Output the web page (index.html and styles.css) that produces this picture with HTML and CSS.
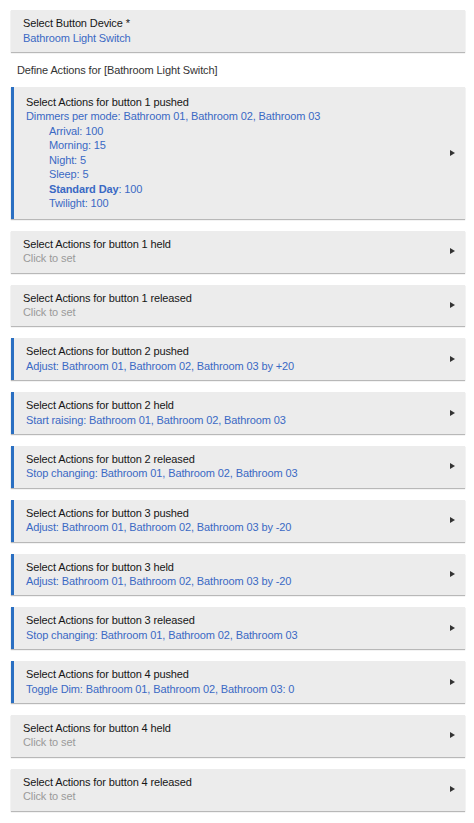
FILE: index.html
```html
<!DOCTYPE html>
<html>
<head>
<meta charset="utf-8">
<link rel="stylesheet" href="styles.css">
</head>
<body>
<div class="page">
  <div class="card">
    <div class="body">
      <div class="title">Select Button Device *</div>
      <div class="value">Bathroom Light Switch</div>
    </div>
  </div>
  <div class="section">Define Actions for [Bathroom Light Switch]</div>
  <div class="list">
    <div class="card set expanded">
      <div class="body">
        <div class="title">Select Actions for button 1 pushed</div>
        <div class="value">Dimmers per mode: Bathroom 01, Bathroom 02, Bathroom 03</div>
        <div class="value indent">Arrival: 100</div>
        <div class="value indent">Morning: 15</div>
        <div class="value indent">Night: 5</div>
        <div class="value indent">Sleep: 5</div>
        <div class="value indent"><b>Standard Day</b>: 100</div>
        <div class="value indent">Twilight: 100</div>
      </div>
      <span class="arrow"></span>
    </div>
    <div class="card">
      <div class="body">
        <div class="title">Select Actions for button 1 held</div>
        <div class="hint">Click to set</div>
      </div>
      <span class="arrow"></span>
    </div>
    <div class="card">
      <div class="body">
        <div class="title">Select Actions for button 1 released</div>
        <div class="hint">Click to set</div>
      </div>
      <span class="arrow"></span>
    </div>
    <div class="card set">
      <div class="body">
        <div class="title">Select Actions for button 2 pushed</div>
        <div class="value">Adjust: Bathroom 01, Bathroom 02, Bathroom 03 by +20</div>
      </div>
      <span class="arrow"></span>
    </div>
    <div class="card set">
      <div class="body">
        <div class="title">Select Actions for button 2 held</div>
        <div class="value">Start raising: Bathroom 01, Bathroom 02, Bathroom 03</div>
      </div>
      <span class="arrow"></span>
    </div>
    <div class="card set">
      <div class="body">
        <div class="title">Select Actions for button 2 released</div>
        <div class="value">Stop changing: Bathroom 01, Bathroom 02, Bathroom 03</div>
      </div>
      <span class="arrow"></span>
    </div>
    <div class="card set">
      <div class="body">
        <div class="title">Select Actions for button 3 pushed</div>
        <div class="value">Adjust: Bathroom 01, Bathroom 02, Bathroom 03 by -20</div>
      </div>
      <span class="arrow"></span>
    </div>
    <div class="card set">
      <div class="body">
        <div class="title">Select Actions for button 3 held</div>
        <div class="value">Adjust: Bathroom 01, Bathroom 02, Bathroom 03 by -20</div>
      </div>
      <span class="arrow"></span>
    </div>
    <div class="card set">
      <div class="body">
        <div class="title">Select Actions for button 3 released</div>
        <div class="value">Stop changing: Bathroom 01, Bathroom 02, Bathroom 03</div>
      </div>
      <span class="arrow"></span>
    </div>
    <div class="card set">
      <div class="body">
        <div class="title">Select Actions for button 4 pushed</div>
        <div class="value">Toggle Dim: Bathroom 01, Bathroom 02, Bathroom 03: 0</div>
      </div>
      <span class="arrow"></span>
    </div>
    <div class="card">
      <div class="body">
        <div class="title">Select Actions for button 4 held</div>
        <div class="hint">Click to set</div>
      </div>
      <span class="arrow"></span>
    </div>
    <div class="card">
      <div class="body">
        <div class="title">Select Actions for button 4 released</div>
        <div class="hint">Click to set</div>
      </div>
      <span class="arrow"></span>
    </div>
  </div>
</div>
</body>
</html>
```
FILE: styles.css
```css
html, body {
  margin: 0;
  padding: 0;
  background: #ffffff;
}
body {
  font-family: "Liberation Sans", Arial, Helvetica, sans-serif;
  font-size: 11px;
  letter-spacing: -0.12px;
  line-height: 14.5px;
  color: #161616;
}
.page {
  padding: 10px 9px 10px 11px;
}
.list {
  display: flex;
  flex-direction: column;
  gap: 12px;
}
.card {
  display: flex;
  align-items: center;
  background: #ececec;
  box-shadow: 0 1px 1px rgba(0, 0, 0, 0.28);
  padding: 6px 10px 6.8px 12px;
}
.card.expanded {
  padding-top: 7.5px;
  padding-bottom: 8px;
}
.card.set {
  border-left: 3px solid #2a6fc2;
}
.body {
  flex: 1;
  min-width: 0;
}
.title {
  color: #161616;
}
.value {
  color: #3a69c4;
}
.value b {
  font-weight: bold;
}
.indent {
  padding-left: 23px;
}
.hint {
  color: #9a9a9a;
}
.section {
  padding: 11px 0 10px 6px;
  color: #333333;
}
.arrow {
  width: 0;
  height: 0;
  border-top: 3px solid transparent;
  border-bottom: 3px solid transparent;
  border-left: 5px solid #333333;
  flex: none;
}
```
